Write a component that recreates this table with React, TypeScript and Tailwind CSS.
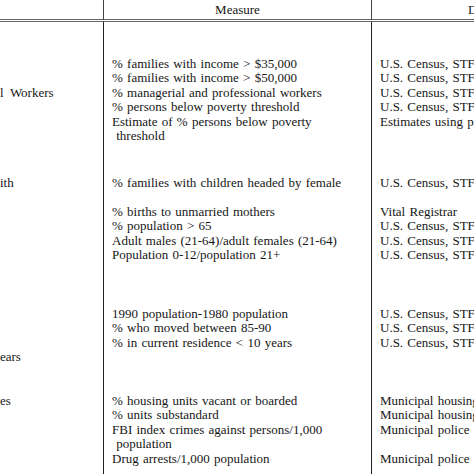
import React from "react";

const L = ({ children }: { children?: React.ReactNode }) => (
  <div className="h-[14.5px] leading-[14.5px] whitespace-nowrap">{children ?? "\u00a0"}</div>
);

export default function App() {
  return (
    <div className="w-[474px] h-[474px] overflow-hidden bg-white text-[#161616] text-[13px] font-['Liberation_Serif','Times_New_Roman',serif]">
      {/* header */}
      <div className="grid grid-cols-[103px_269px_1fr] h-[19px]">
        <div />
        <div className="border-l border-r border-[#444] text-center leading-[20px]">Measure</div>
        <div className="pl-[96px] leading-[20px] whitespace-nowrap">Data Source</div>
      </div>
      <div className="h-[3px] border-t border-b border-[#666]" />
      {/* body */}
      <div className="grid grid-cols-[103px_269px_1fr] h-[452px]">
        <div className="flex flex-col">
          <div className="h-[63.75px]" />
          <L>l&nbsp; Workers</L>
          <div className="h-[75.5px]" />
          <L>ith</L>
          <div className="h-[159.5px]" />
          <L>ears</L>
          <div className="h-[29.5px]" />
          <L>es</L>
        </div>
        <div className="flex flex-col border-l-[1.5px] border-r-[1.5px] border-[#222] pl-2 [word-spacing:1px]">
          <div className="h-[34.75px] shrink-0" />
          <L>% families with income &gt; $35,000</L>
          <L>% families with income &gt; $50,000</L>
          <L>% managerial and professional workers</L>
          <L>% persons below poverty threshold</L>
          <L>Estimate of % persons below poverty</L>
          <L>&nbsp;threshold</L>
          <div className="h-[32px] shrink-0" />
          <L>% families with children headed by female</L>
          <L />
          <L>% births to unmarried mothers</L>
          <L>% population &gt; 65</L>
          <L>Adult males (21-64)/adult females (21-64)</L>
          <L>Population 0-12/population 21+</L>
          <div className="h-[44px] shrink-0" />
          <L>1990 population-1980 population</L>
          <L>% who moved between 85-90</L>
          <L>% in current residence &lt; 10 years</L>
          <div className="h-[43.5px] shrink-0" />
          <L>% housing units vacant or boarded</L>
          <L>% units substandard</L>
          <L>FBI index crimes against persons/1,000</L>
          <L>&nbsp;population</L>
          <L>Drug arrests/1,000 population</L>
        </div>
        <div className="flex flex-col pl-2 overflow-hidden [word-spacing:1px]">
          <div className="h-[34.75px] shrink-0" />
          <L>U.S. Census, STF3A</L>
          <L>U.S. Census, STF3A</L>
          <L>U.S. Census, STF3A</L>
          <L>U.S. Census, STF3A</L>
          <L>Estimates using poverty model</L>
          <L />
          <div className="h-[32px] shrink-0" />
          <L>U.S. Census, STF1A</L>
          <L />
          <L>Vital Registrar</L>
          <L>U.S. Census, STF1A</L>
          <L>U.S. Census, STF1A</L>
          <L>U.S. Census, STF1A</L>
          <div className="h-[44px] shrink-0" />
          <L>U.S. Census, STF1A</L>
          <L>U.S. Census, STF3A</L>
          <L>U.S. Census, STF3A</L>
          <div className="h-[43.5px] shrink-0" />
          <L>Municipal housing</L>
          <L>Municipal housing</L>
          <L>Municipal police</L>
          <L />
          <L>Municipal police</L>
        </div>
      </div>
    </div>
  );
}
